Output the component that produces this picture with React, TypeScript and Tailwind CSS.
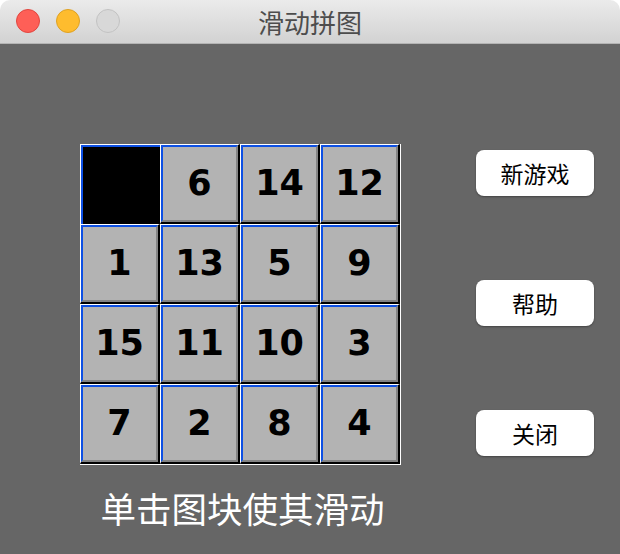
import React from "react";

const board: (number | null)[] = [null, 6, 14, 12, 1, 13, 5, 9, 15, 11, 10, 3, 7, 2, 8, 4];

function Tile({ n }: { n: number | null }) {
  if (n === null) {
    return (
      <div className="w-[80px] h-[80px] border-l border-t border-l-white border-t-white bg-black">
        <div className="w-full h-full border-l-2 border-t-2 border-l-[#0d50e4] border-t-[#0d50e4] bg-black" />
      </div>
    );
  }
  return (
    <div className="w-[80px] h-[80px] border-l border-t border-r-2 border-b-2 border-l-white border-t-white border-r-black border-b-black">
      <div className="w-full h-full border-l-2 border-t-2 border-r-2 border-b-2 border-l-[#0d50e4] border-t-[#0d50e4] border-r-[#848484] border-b-[#848484] bg-[#b3b3b3] flex items-center justify-center">
        <span className="text-[35px] font-bold text-black leading-none" style={{ fontFamily: '"DejaVu Sans", sans-serif' }}>
          {n}
        </span>
      </div>
    </div>
  );
}

function Btn({ label }: { label: string }) {
  return (
    <div className="w-[118px] h-[46px] bg-white rounded-[8px] shadow-[0_1px_2px_rgba(0,0,0,0.35)] flex items-center justify-center text-[23px] text-black">
      {label}
    </div>
  );
}

export default function App() {
  return (
    <div
      className="w-[620px] h-[554px] bg-white overflow-hidden"
      style={{ fontFamily: '"Noto Sans CJK SC", "Noto Sans", sans-serif' }}
    >
      <div className="w-full h-full rounded-t-[10px] overflow-hidden flex flex-col">
        <div className="h-[44px] shrink-0 bg-gradient-to-b from-[#ebebeb] to-[#d2d2d2] border-b border-[#b4b4b4] relative flex items-center justify-center">
          <div className="absolute left-[16px] top-[9px] flex gap-[16px]">
            <div className="w-[24px] h-[24px] rounded-full bg-[#fe5f57] border border-[#e1463f]" />
            <div className="w-[24px] h-[24px] rounded-full bg-[#febc2e] border border-[#dea123]" />
            <div className="w-[24px] h-[24px] rounded-full bg-[#d8d8d8] border border-[#c2c2c2]" />
          </div>
          <span className="text-[26px] text-[#4d4d4d] leading-none">滑动拼图</span>
        </div>
        <div className="flex-1 bg-[#666666] flex">
          <div className="pl-[80px] pt-[100px] flex flex-col">
            <div className="grid grid-cols-4 w-[321px] border-r border-b border-white">
              {board.map((n, i) => (
                <Tile key={i} n={n} />
              ))}
            </div>
            <div className="w-[325px] mt-[21px] text-center text-white text-[35.5px] leading-[43px]">
              单击图块使其滑动
            </div>
          </div>
          <div className="ml-[71px] pt-[106px] flex flex-col gap-[84px]">
            <Btn label="新游戏" />
            <Btn label="帮助" />
            <Btn label="关闭" />
          </div>
        </div>
      </div>
    </div>
  );
}
